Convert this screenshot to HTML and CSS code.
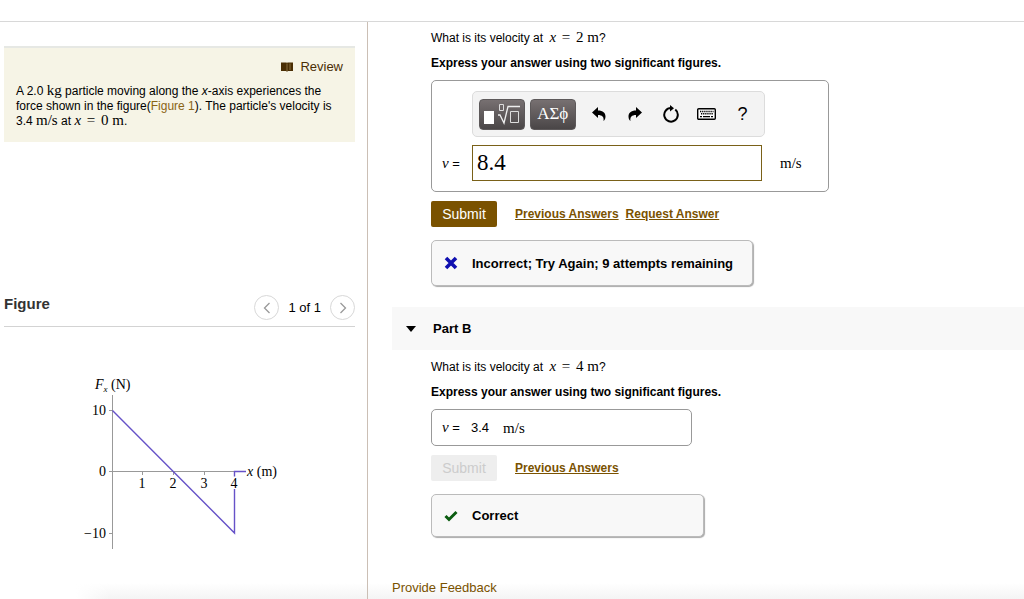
FILE: index.html
```html
<!DOCTYPE html>
<html lang="en">
<head>
<meta charset="utf-8">
<meta name="viewport" content="width=device-width, initial-scale=1">
<title>Particle velocity</title>
<link rel="stylesheet" href="styles.css">
</head>
<body>
<header class="topbar"></header>
<div class="layout">
  <aside class="sidebar">
    <section class="problem">
      <a class="review" href="#review">
        <svg class="icon-book" width="12" height="10" viewBox="0 0 12 10" aria-hidden="true"><path d="M0 .5h5.500l.5.500.5-.5H12v8.500H7l-1 .8-1-.8H0z" fill="#4a2e04"/><path d="M6 1.500V9M9 1.500V8" stroke="#a58a5a" stroke-width=".7"/></svg>
        <span>Review</span>
      </a>
      <p class="statement">A 2.0 <span class="math">kg</span> particle moving along the <i>x</i>-axis experiences the force shown in the figure(<a href="#figure">Figure 1</a>). The particle's velocity is 3.4 <span class="math">m/s</span> at <span class="math"><i>x</i> <span class="eq">=</span> 0 m</span>.</p>
    </section>
    <section class="figure" id="figure">
      <div class="figure-head">
        <h2>Figure</h2>
        <nav class="pager" aria-label="Figures">
          <button type="button" aria-label="Previous figure"><svg width="8" height="12" viewBox="0 0 8 12"><path d="M6.500 1 1.500 6l5 5" fill="none" stroke="#999" stroke-width="1.300"/></svg></button>
          <span>1 of 1</span>
          <button type="button" aria-label="Next figure"><svg width="8" height="12" viewBox="0 0 8 12"><path d="m1.500 1 5 5-5 5" fill="none" stroke="#999" stroke-width="1.300"/></svg></button>
        </nav>
      </div>
      <svg class="chart" width="220" height="190" viewBox="0 0 220 190" role="img" aria-label="Force against position">
        <path class="axis" d="M42.500 25v154M39 101.500h126M39 40.500h4M39 163.500h4M72.500 101v4M103.500 101v4M134.500 101v4"/>
        <path class="plot" d="m42.500 40.500 122 122.500v-44M164.500 106.500v-5H176"/>
        <text x="25" y="19"><tspan class="var">F</tspan><tspan class="sub" dy="3">x</tspan><tspan dy="-3"> (N)</tspan></text>
        <text x="36" y="45" text-anchor="end">10</text>
        <text x="36" y="106" text-anchor="end">0</text>
        <text x="36" y="168" text-anchor="end">−10</text>
        <text x="72" y="118" text-anchor="middle">1</text>
        <text x="103" y="118" text-anchor="middle">2</text>
        <text x="134" y="118" text-anchor="middle">3</text>
        <text x="164" y="118" text-anchor="middle">4</text>
        <text x="177" y="106"><tspan class="var">x</tspan> (m)</text>
      </svg>
    </section>
  </aside>
  <main class="content">
    <section class="part">
      <p class="question">What is its velocity at <span class="math"><i>x</i> <span class="eq">=</span> 2 m</span>?</p>
      <p class="instruction">Express your answer using two significant figures.</p>
      <form class="answer">
        <div class="tools">
          <button type="button" class="dark" aria-label="Templates"><svg width="36" height="22" viewBox="0 0 36 22"><path d="M0 8h10v13H0z" fill="#fff"/><path d="M15.500 1.500h4v6h-4zM26.500 8.500h8v11h-8z" fill="none" stroke="#ddd"/><path d="M14 12h2l4 8 4-16.500h12" fill="none" stroke="#eee" stroke-width="1.300"/></svg></button>
          <button type="button" class="dark">ΑΣϕ</button>
          <button type="button" class="tool" aria-label="Undo"><svg width="14" height="14" viewBox="0 0 14 14"><path d="M0 5.500 6 0v3.500c5 0 7.500 2.500 7.500 6 0 2-.8 3.500-2 4.500.8-4-1.500-6-5.500-6v3z"/></svg></button>
          <button type="button" class="tool" aria-label="Redo"><svg width="14" height="14" viewBox="0 0 14 14"><path d="M14 5.500 8 0v3.500c-5 0-7.500 2.500-7.500 6 0 2 .8 3.500 2 4.500-.8-4 1.500-6 5.500-6v3z"/></svg></button>
          <button type="button" class="tool" aria-label="Reset"><svg width="18" height="18" viewBox="0 0 18 18"><path d="M13.300 4.500A6.800 6.800 0 1 1 9 3" fill="none" stroke="#000" stroke-width="2"/><path d="M8 0l4 3.200L8 6.500z"/></svg></button>
          <button type="button" class="tool" aria-label="Keyboard"><svg width="19" height="12" viewBox="0 0 19 12"><rect x=".7" y=".7" width="17.600" height="10.600" rx="1" fill="#fff" stroke="#000" stroke-width="1.400"/><path d="M3 3.500h13.500M4 5.800h12" stroke="#000" stroke-width="1.400" stroke-dasharray="1.300 .8"/><path d="M3 8.600h2M6 8.600h7M14 8.600h2" stroke="#000" stroke-width="1.400"/></svg></button>
          <button type="button" class="tool help" aria-label="Help">?</button>
        </div>
        <label class="label" for="v"><span class="math"><i>v</i></span> =</label>
        <input id="v" class="field" type="text" value="8.4">
        <span class="math unit">m/s</span>
      </form>
      <div class="actions">
        <button type="button" class="submit">Submit</button>
        <a href="#previous">Previous Answers</a>
        <a href="#request">Request Answer</a>
      </div>
      <div class="feedback" role="status">
        <svg width="14" height="14" viewBox="0 0 14 14" aria-hidden="true"><path d="m2 2 10 10M12 2 2 12" stroke="#1010b0" stroke-width="3.600"/></svg>
        <strong>Incorrect; Try Again; 9 attempts remaining</strong>
      </div>
    </section>
    <h2 class="part-head"><button type="button"><svg width="10" height="6" viewBox="0 0 10 6" aria-hidden="true"><path d="M0 0h10L5 6z"/></svg>Part B</button></h2>
    <section class="part">
      <p class="question">What is its velocity at <span class="math"><i>x</i> <span class="eq">=</span> 4 m</span>?</p>
      <p class="instruction">Express your answer using two significant figures.</p>
      <div class="result"><span class="label"><span class="math"><i>v</i></span> =</span><span class="value">3.4</span><span class="math">m/s</span></div>
      <div class="actions">
        <button type="button" class="submit" disabled>Submit</button>
        <a href="#previous-b">Previous Answers</a>
      </div>
      <div class="feedback correct" role="status">
        <svg width="14" height="12" viewBox="0 0 14 12" aria-hidden="true"><path d="m1.500 6 3.500 3.500L12.500 2" fill="none" stroke="#0b5c10" stroke-width="3"/></svg>
        <strong>Correct</strong>
      </div>
    </section>
    <a class="provide" href="#feedback">Provide Feedback</a>
  </main>
</div>
</body>
</html>
```
FILE: styles.css
```css
* { box-sizing: border-box; }
body {
  margin: 0;
  min-height: 100vh;
  display: flex;
  flex-direction: column;
  background: #fff;
  color: #000;
  font: 13px/15px "Liberation Sans", Arial, sans-serif;
}
p, h2 { margin: 0; }
button { font: inherit; cursor: pointer; }
a { color: #7a5200; }
.topbar { height: 22px; border-bottom: 1px solid #d8d8d8; }
.layout {
  flex: 1;
  display: grid;
  grid-template-columns: 23fr 41fr;
  background:
    linear-gradient(to right, #fff 76px, transparent 110px),
    linear-gradient(to top, #f4f4f4, #fff 16px);
}
.sidebar {
  padding: 24px 12px 0 4px;
  border-right: 1px solid #cbbfb5;
}
.math { font-family: "Liberation Serif", serif; font-size: 15px; line-height: 12px; }
.question .math { margin-left: 3px; }
.eq { margin: 0 2px; }

.problem {
  padding: 11px 12px 13px;
  border-top: 2px solid #e6e8e4;
  background: #f6f4e6;
}
.review {
  display: flex;
  justify-content: flex-end;
  align-items: center;
  gap: 7px;
  margin-bottom: 10px;
  color: #4a2e04;
  text-decoration: none;
}
.statement, .question, .instruction { font-size: 12px; }
.statement a { color: #8a6414; text-decoration: none; }
.figure-head {
  display: flex;
  justify-content: space-between;
  align-items: flex-start;
  margin-top: 153px;
  padding-bottom: 6px;
  border-bottom: 1px solid #d3d3d3;
}
.figure-head h2 { font-size: 15px; line-height: 18px; color: #333; }
.pager { display: flex; align-items: center; gap: 9px; }
.pager button {
  display: flex;
  align-items: center;
  justify-content: center;
  width: 25px;
  height: 25px;
  padding: 0;
  border: 1px solid #d8d8d8;
  border-radius: 50%;
  background: #fff;
}
.chart {
  display: block;
  margin: 43px 0 0 66px;
  font: 14px "Liberation Serif", serif;
}
.axis { fill: none; stroke: #999; }
.plot { fill: none; stroke: #6652c8; stroke-width: 1.400; }
.var { font-style: italic; }
.sub { font-style: italic; font-size: 9px; }

.content { padding: 9px 0 0 24px; }
.part { padding-left: 39px; }
.question { margin-bottom: 10px; }
.instruction { font-weight: bold; }
.answer {
  display: grid;
  grid-template-columns: 30px 293px auto;
  align-items: center;
  row-gap: 8px;
  width: 398px;
  max-width: 100%;
  margin-top: 9px;
  padding: 10px;
  border: 1px solid #999;
  border-radius: 5px;
}
.tools {
  grid-column: 2 / 3;
  display: flex;
  align-items: center;
  gap: 5px;
  height: 46px;
  padding: 6px;
  border: 1px solid #dcdcdc;
  border-radius: 5px;
  background: #f3f3f3;
}
.answer .label { grid-column: 1; }
.dark {
  display: flex;
  align-items: center;
  justify-content: center;
  width: 46px;
  height: 31px;
  padding: 0;
  border: 1px solid #5d595a;
  border-radius: 4px;
  background: linear-gradient(#777071, #4a4647);
  color: #fff;
  font: 17px "Liberation Serif", serif;
}
.tool {
  display: flex;
  align-items: center;
  justify-content: center;
  width: 31px;
  height: 31px;
  padding: 0;
  border: 0;
  background: none;
  color: #000;
}
.dark + .tool { margin-left: 3px; }
.help { font-size: 18px; }
.label { white-space: nowrap; }
.field {
  width: 290px;
  height: 36px;
  padding: 0 4px;
  border: 1px solid #7a6118;
  background: #fff;
  color: #000;
  font: 23px "Liberation Serif", serif;
}
.unit { padding-left: 15px; }
.actions {
  display: flex;
  align-items: center;
  gap: 7px;
  margin-top: 9px;
  font-size: 12px;
  font-weight: bold;
}
.submit {
  width: 66px;
  height: 26px;
  margin-right: 11px;
  padding: 0;
  border: 0;
  border-radius: 2px;
  background: #7a5200;
  color: #fff;
  font-size: 14px;
  font-weight: normal;
}
.submit:disabled { background: #eee; color: #ccc; }
.feedback {
  display: flex;
  align-items: center;
  gap: 14px;
  width: 322px;
  max-width: 100%;
  height: 46px;
  margin-top: 13px;
  padding: 0 12px;
  border: 1px solid #bbb;
  border-radius: 5px;
  background: #f8f8f8;
  box-shadow: 1px 1px 1px #aaa;
}
.correct { width: 273px; height: 43px; }
.part-head { margin: 21px 0 10px; background: #f8f8f8; font-size: 13px; }
.part-head button {
  display: flex;
  align-items: center;
  gap: 17px;
  width: 100%;
  height: 43px;
  padding: 0 14px;
  border: 0;
  background: none;
  color: #000;
  font-weight: bold;
}
.result {
  display: flex;
  align-items: center;
  width: 261px;
  max-width: 100%;
  height: 37px;
  margin-top: 9px;
  padding: 0 10px;
  border: 1px solid #999;
  border-radius: 5px;
}
.result .label { width: 29px; }
.value { margin-right: 14px; }
.provide {
  display: block;
  margin-top: 43px;
  font-size: 13px;
  text-decoration: none;
}
```
